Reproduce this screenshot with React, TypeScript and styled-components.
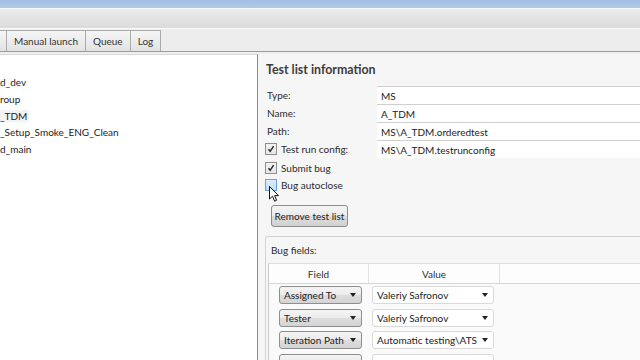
import styled, { createGlobalStyle } from 'styled-components';

const Global = createGlobalStyle`
  html, body {
    margin: 0;
    padding: 0;
    background: #f0f0f0;
  }
`;

const Window = styled.div`
  position: relative;
  width: 640px;
  height: 360px;
  overflow: hidden;
  display: flex;
  flex-direction: column;
  background: #efefef;
  font-family: Lato, 'Open Sans', sans-serif;
  font-size: 10px;
  color: #1e1e1e;
`;

const TitleBar = styled.div`
  height: 8px;
  flex: none;
  background: linear-gradient(#a3bfe3, #b2cae9);
`;

const MenuBand = styled.div`
  height: 19px;
  flex: none;
  border-top: 1px solid #f8f8f8;
  border-bottom: 1px solid #fbfbfb;
  background: linear-gradient(#ececec, #dcdbdb);
`;

const TabStrip = styled.div`
  height: 22px;
  flex: none;
  display: flex;
  align-items: flex-end;
  background: #ededed;
  border-bottom: 1px solid #9b9b9b;
`;

const Tab = styled.div<{ $stub?: boolean }>`
  height: 20px;
  display: flex;
  align-items: center;
  padding: ${(p) => (p.$stub ? '0' : '0 7px')};
  width: ${(p) => (p.$stub ? '6px' : 'auto')};
  border: 1px solid #ababab;
  border-left: ${(p) => (p.$stub ? 'none' : '1px solid #ababab')};
  border-bottom: none;
  margin-right: -1px;
  background: linear-gradient(#f5f5f5, #e3e3e3);
  color: #333;
`;

const Main = styled.div`
  flex: 1;
  display: flex;
  padding-top: 2px;
  min-height: 0;
`;

const TreePanel = styled.div`
  width: 257px;
  flex: none;
  background: #ffffff;
  border-top: 1px solid #d9d9d9;
  border-right: 1px solid #8c8c8c;
  padding-top: 19px;
`;

const TreeItem = styled.div<{ $selected?: boolean }>`
  height: 16.75px;
  line-height: 16.75px;
  white-space: nowrap;
  color: #222;
  span {
    padding-right: 2px;
    background: ${(p) => (p.$selected ? '#f1f3f5' : 'transparent')};
  }
`;

const InfoPanel = styled.div`
  flex: 1;
  background: #f6f6f6;
  padding: 8px 0 0 8px;
  min-width: 0;
`;

const Heading = styled.div`
  font-weight: 700;
  font-size: 12.4px;
  line-height: 16px;
  color: #3c3c3c;
`;

const FormGrid = styled.div`
  margin-top: 8px;
  display: grid;
  grid-template-columns: 111px 320px;
  grid-auto-rows: 18px;
`;

const Label = styled.div`
  display: flex;
  align-items: center;
  padding-left: 1px;
  color: #2a2a2a;
`;

const Field = styled.div`
  display: flex;
  align-items: center;
  height: 17px;
  padding-left: 4px;
  background: #ffffff;
  border-top: 1px solid #cfcfcf;
  color: #222;
`;

const CheckRow = styled.div<{ $gapTop?: number }>`
  display: flex;
  align-items: center;
  gap: 4px;
  height: 17px;
  margin-top: ${(p) => p.$gapTop ?? 0}px;
  white-space: nowrap;
  color: #2a2a2a;
`;

const Box = styled.div<{ $hover?: boolean }>`
  width: 10px;
  height: 10px;
  flex: none;
  margin-left: -1px;
  display: flex;
  align-items: center;
  justify-content: center;
  border: 1px solid ${(p) => (p.$hover ? '#6aa3d8' : '#8f8f8f')};
  background: ${(p) =>
    p.$hover ? 'linear-gradient(#dcecfb, #c3def6)' : 'linear-gradient(#f3f3f3, #e6e6e6)'};
`;

const ActionButton = styled.button`
  display: block;
  margin: 12px 0 0 5px;
  height: 22px;
  width: 77px;
  padding: 0;
  white-space: nowrap;
  font: inherit;
  color: #222;
  border: 1px solid #8d8d8d;
  border-radius: 3px;
  background: linear-gradient(#f4f4f4 0%, #ebebeb 50%, #dcdcdc 51%, #d2d2d2 100%);
`;

const Group = styled.div`
  margin: 9px 0 0 -1px;
  border-top: 1px solid #d3d3d3;
  border-left: 1px solid #d3d3d3;
  border-top-left-radius: 3px;
  padding: 6px 0 0 2px;
`;

const GroupTitle = styled.div`
  line-height: 14px;
  padding-left: 3px;
  color: #2a2a2a;
`;

const Table = styled.div`
  margin-top: 6px;
  background: #fafafa;
  border-left: 1px solid #c9c9c9;
  border-top: 1px solid #dedede;
  height: 200px;
`;

const HeaderRow = styled.div`
  display: flex;
  height: 19px;
  border-bottom: 1px solid #d6d6d6;
  background: #fdfdfd;
`;

const HeaderCell = styled.div<{ $w: number }>`
  width: ${(p) => p.$w}px;
  flex: none;
  display: flex;
  align-items: center;
  justify-content: center;
  border-right: 1px solid #e2e2e2;
  color: #333;
`;

const Rows = styled.div`
  display: flex;
  flex-direction: column;
  gap: 4.5px;
  padding: 2px 0 0 10px;
`;

const Row = styled.div`
  display: flex;
  gap: 10px;
`;

const Combo = styled.div<{ $w: number; $flat?: boolean }>`
  width: ${(p) => p.$w}px;
  height: 18px;
  flex: none;
  box-sizing: border-box;
  display: flex;
  align-items: center;
  justify-content: space-between;
  padding: 0 5px 0 4px;
  border-radius: 3px;
  white-space: nowrap;
  color: #222;
  border: 1px solid ${(p) => (p.$flat ? '#d9d9d9' : '#8e8e8e')};
  background: ${(p) =>
    p.$flat
      ? '#ffffff'
      : 'linear-gradient(#f4f4f4 0%, #ebebeb 50%, #dddddd 51%, #d4d4d4 100%)'};
`;

const Arrow = styled.span`
  width: 0;
  height: 0;
  flex: none;
  margin-left: 4px;
  border-left: 3px solid transparent;
  border-right: 3px solid transparent;
  border-top: 4px solid #222;
`;

const Cursor = styled.svg`
  position: absolute;
  left: 269px;
  top: 186px;
`;

const Check = () => (
  <svg width="8" height="8" viewBox="0 0 8 8">
    <path d="M1.5 4.2 L3.2 6.3 L6.6 1.2" fill="none" stroke="#2b2b2b" strokeWidth="1.5" />
  </svg>
);

const treeItems = ['d_dev', 'roup', '_TDM', '_Setup_Smoke_ENG_Clean', 'd_main'];

const info = [
  ['Type:', 'MS'],
  ['Name:', 'A_TDM'],
  ['Path:', 'MS\\A_TDM.orderedtest'],
];

const bugFields = [
  ['Assigned To', 'Valeriy Safronov'],
  ['Tester', 'Valeriy Safronov'],
  ['Iteration Path', 'Automatic testing\\ATS'],
  ['Area Path', 'Automatic testing\\ATS'],
];

export default function App() {
  return (
    <Window>
      <Global />
      <TitleBar />
      <MenuBand />
      <TabStrip>
        <Tab $stub />
        <Tab>Manual launch</Tab>
        <Tab>Queue</Tab>
        <Tab>Log</Tab>
      </TabStrip>
      <Main>
        <TreePanel>
          {treeItems.map((t) => (
            <TreeItem key={t} $selected={t === '_TDM'}>
              <span>{t}</span>
            </TreeItem>
          ))}
        </TreePanel>
        <InfoPanel>
          <Heading>Test list information</Heading>
          <FormGrid>
            {info.map(([l, v]) => [
              <Label key={l}>{l}</Label>,
              <Field key={v}>{v}</Field>,
            ])}
            <CheckRow>
              <Box>
                <Check />
              </Box>
              Test run config:
            </CheckRow>
            <Field>MS\A_TDM.testrunconfig</Field>
          </FormGrid>
          <CheckRow $gapTop={1}>
            <Box>
              <Check />
            </Box>
            Submit bug
          </CheckRow>
          <CheckRow>
            <Box $hover />
            Bug autoclose
          </CheckRow>
          <ActionButton>Remove test list</ActionButton>
          <Group>
            <GroupTitle>Bug fields:</GroupTitle>
            <Table>
              <HeaderRow>
                <HeaderCell $w={99}>Field</HeaderCell>
                <HeaderCell $w={130}>Value</HeaderCell>
              </HeaderRow>
              <Rows>
                {bugFields.map(([f, v]) => (
                  <Row key={f}>
                    <Combo $w={83}>
                      {f}
                      <Arrow />
                    </Combo>
                    <Combo $w={122} $flat>
                      {v}
                      <Arrow />
                    </Combo>
                  </Row>
                ))}
              </Rows>
            </Table>
          </Group>
        </InfoPanel>
      </Main>
      <Cursor width="12" height="17" viewBox="0 0 12 17">
        <path
          d="M0.5 0.5 L0.5 13 L3.5 10.2 L5.6 15.2 L7.6 14.3 L5.6 9.6 L9.5 9.6 Z"
          fill="#ffffff"
          stroke="#111"
          strokeWidth="1"
        />
      </Cursor>
    </Window>
  );
}
